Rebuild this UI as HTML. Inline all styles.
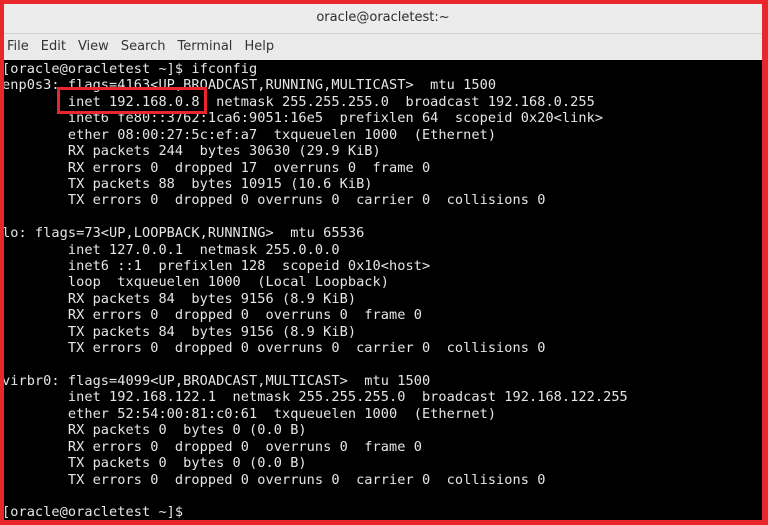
<!DOCTYPE html><html><head><style>
body{margin:0;width:768px;height:525px;background:#e8262c;position:relative;overflow:hidden}
#t{position:absolute;left:4px;top:4px;width:758px;height:29px;background:#ececec;border-bottom:1px solid #d0d0d0;font:13px "DejaVu Sans",sans-serif;text-align:center;line-height:28px;color:#2e2e2e}
#m{position:absolute;left:4px;top:34px;width:758px;height:26px;background:#eaeaea;font:13px "DejaVu Sans",sans-serif;line-height:26px;color:#333}
#m span{margin-left:3px;margin-right:9px}
#k{position:absolute;left:4px;top:60px;width:758px;height:460px;background:#000;overflow:hidden}
pre{margin:0;position:absolute;left:-2px;top:1px;font:13.6px/16.42px "DejaVu Sans Mono",monospace;letter-spacing:0.05px;color:#e6e6e6}
#b{position:absolute;left:57px;top:87px;width:144px;height:21px;border:3px solid #e8262c}
</style></head><body>
<div id="t">oracle@oracletest:~</div>
<div id="m"><span>File</span><span>Edit</span><span>View</span><span>Search</span><span>Terminal</span><span>Help</span></div>
<div id="k"><pre>[oracle@oracletest ~]$ ifconfig
enp0s3: flags=4163&lt;UP,BROADCAST,RUNNING,MULTICAST&gt;  mtu 1500
        inet 192.168.0.8  netmask 255.255.255.0  broadcast 192.168.0.255
        inet6 fe80::3762:1ca6:9051:16e5  prefixlen 64  scopeid 0x20&lt;link&gt;
        ether 08:00:27:5c:ef:a7  txqueuelen 1000  (Ethernet)
        RX packets 244  bytes 30630 (29.9 KiB)
        RX errors 0  dropped 17  overruns 0  frame 0
        TX packets 88  bytes 10915 (10.6 KiB)
        TX errors 0  dropped 0 overruns 0  carrier 0  collisions 0

lo: flags=73&lt;UP,LOOPBACK,RUNNING&gt;  mtu 65536
        inet 127.0.0.1  netmask 255.0.0.0
        inet6 ::1  prefixlen 128  scopeid 0x10&lt;host&gt;
        loop  txqueuelen 1000  (Local Loopback)
        RX packets 84  bytes 9156 (8.9 KiB)
        RX errors 0  dropped 0  overruns 0  frame 0
        TX packets 84  bytes 9156 (8.9 KiB)
        TX errors 0  dropped 0 overruns 0  carrier 0  collisions 0

virbr0: flags=4099&lt;UP,BROADCAST,MULTICAST&gt;  mtu 1500
        inet 192.168.122.1  netmask 255.255.255.0  broadcast 192.168.122.255
        ether 52:54:00:81:c0:61  txqueuelen 1000  (Ethernet)
        RX packets 0  bytes 0 (0.0 B)
        RX errors 0  dropped 0  overruns 0  frame 0
        TX packets 0  bytes 0 (0.0 B)
        TX errors 0  dropped 0 overruns 0  carrier 0  collisions 0

[oracle@oracletest ~]$</pre></div>
<div id="b"></div>
</body></html>
